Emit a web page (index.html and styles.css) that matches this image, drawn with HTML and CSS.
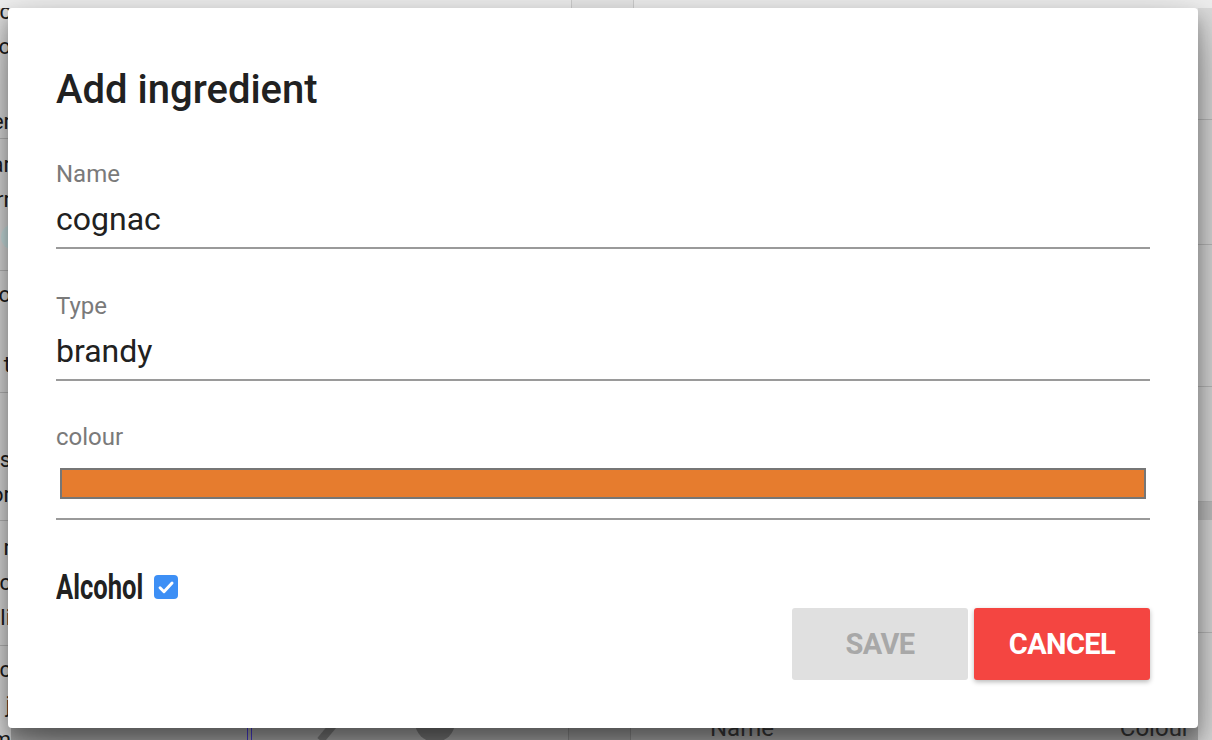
FILE: index.html
```html
<!DOCTYPE html>
<html>
<head>
<meta charset="utf-8">
<link rel="stylesheet" href="styles.css">
</head>
<body>
<div class="page">
  <div class="topbar">
    <div class="top-left"></div>
    <div class="top-tab"></div>
    <div class="top-right"></div>
  </div>
  <div class="main">
    <div class="list">
      <div class="row r1"><span>c</span><span>o</span><span class="gap">er</span></div>
      <div class="row r2"><span>ar</span><span>rr</span><span class="dot"></span></div>
      <div class="row r3"><span>o</span><span class="gap">t</span></div>
      <div class="row r4"><span>as</span><span>or</span></div>
      <div class="row r5"><span>r</span><span>ic</span><span>li</span></div>
      <div class="row r6"><span>c</span><span>j</span><span>um</span></div>
    </div>
    <div class="center">
      <div class="bottom-row">
        <span class="blue-lines"></span>
        <span class="slash"></span>
        <span class="knob"></span>
        <span class="tab-box"></span>
        <span class="th th-name">Name</span>
        <span class="th th-colour">Colour</span>
      </div>
    </div>
    <div class="side">
      <div class="side-row s1"></div>
      <div class="side-row s2"></div>
      <div class="side-row s3"></div>
      <div class="side-row s4"></div>
      <div class="side-band"></div>
      <div class="side-row s5"></div>
    </div>
  </div>
</div>

<div class="overlay">
  <div class="modal">
    <h2 class="title">Add ingredient</h2>

    <div class="field first">
      <label class="label">Name</label>
      <div class="value">cognac</div>
    </div>

    <div class="field">
      <label class="label">Type</label>
      <div class="value">brandy</div>
    </div>

    <div class="field colour-field">
      <label class="label">colour</label>
      <div class="swatch"></div>
    </div>

    <div class="check-row">
      <span class="check-label">Alcohol</span>
      <span class="checkbox">
        <svg viewBox="0 0 24 24" width="22" height="22"><path d="M5.5 12.8l4.3 4.3L18.6 7.6" fill="none" stroke="#fff" stroke-width="3.2" stroke-linecap="round" stroke-linejoin="round"/></svg>
      </span>
    </div>

    <div class="actions">
      <button class="btn btn-save">SAVE</button>
      <button class="btn btn-cancel">CANCEL</button>
    </div>
  </div>
</div>
</body>
</html>
```

FILE: styles.css
```css
html, body {
  margin: 0;
  padding: 0;
}
body {
  width: 1212px;
  height: 740px;
  overflow: hidden;
  position: relative;
  background: #ebebeb;
  font-family: Roboto, "Liberation Sans", sans-serif;
}

/* ---------- background page ---------- */
.page {
  display: flex;
  flex-direction: column;
  height: 740px;
}
.topbar {
  height: 8px;
  display: flex;
  background: #efefef;
}
.top-left { width: 571px; }
.top-tab {
  width: 61px;
  background: #e9e9e9;
  border-left: 1px solid #cfcfcf;
  border-right: 1px solid #cfcfcf;
}
.top-right { flex: 1; }

.main {
  flex: 1;
  display: flex;
  min-height: 0;
}
.list {
  width: 11px;
  background: #dedede;
  color: #1c1c1c;
  font-size: 22px;
  direction: rtl;
  overflow: hidden;
}
.row {
  box-sizing: border-box;
  display: flex;
  flex-direction: column;
  align-items: flex-start;
  border-bottom: 1px solid #b9b9b9;
  line-height: 35px;
}
.row span { white-space: nowrap; }
.r1 { height: 145px; margin-top: -14px; }
.r2 { height: 132px; padding-top: 8px; }
.r3 { height: 122px; padding-top: 6px; }
.r4 { height: 128px; padding-top: 49px; }
.r5 { height: 125px; padding-top: 9px; }
.r6 { height: 110px; padding-top: 6px; border-bottom: 0; }
.r1 .gap { margin-top: 40px; }
.r3 .gap { margin-top: 35px; }
.dot {
  width: 26px;
  height: 26px;
  border-radius: 50%;
  background: #cde3e4;
  margin-top: 7px;
  margin-right: -16px;
}
.center {
  flex: 1;
  display: flex;
  flex-direction: column;
  justify-content: flex-end;
}
.bottom-row {
  height: 16px;
  display: flex;
  align-items: flex-start;
  background: #adadad;
  color: #3a3a3a;
  font-size: 24px;
  line-height: 16px;
  overflow: hidden;
}
.blue-lines {
  width: 3px;
  height: 16px;
  border-left: 1px solid #4a3bd6;
  border-right: 1px solid #4a3bd6;
  margin-left: 236px;
}
.slash {
  width: 8px;
  height: 30px;
  background: #7d7d7d;
  transform: rotate(40deg);
  margin-left: 74px;
  margin-top: -10px;
}
.knob {
  width: 40px;
  height: 40px;
  border-radius: 50%;
  background: #7b7b7b;
  margin-left: 81px;
  margin-top: -22px;
}
.tab-box {
  width: 61px;
  height: 16px;
  background: #a5a5a5;
  border-left: 1px solid #8f8f8f;
  border-right: 1px solid #8f8f8f;
  margin-left: 113px;
}
.th { white-space: nowrap; margin-top: -4px; }
.th-name { margin-left: 79px; }
.th-colour { margin-left: auto; margin-right: 8px; }

.side {
  width: 14px;
  display: flex;
  flex-direction: column;
  background: #dcdcdc;
}
.side-row { border-bottom: 1px solid #bdbdbd; }
.s1 { height: 111px; }
.s2 { height: 124px; }
.s3 { height: 141px; }
.s4 { height: 114px; }
.side-band { height: 18px; background: #c4c4c4; }
.s5 { height: 112px; }

/* ---------- overlay & modal ---------- */
.overlay {
  position: absolute;
  inset: 0;
  display: flex;
  padding: 8px 14px 12px 8px;
}
.modal {
  flex: 1;
  background: #fff;
  border-radius: 4px;
  padding: 0 48px 48px 48px;
  display: flex;
  flex-direction: column;
  box-shadow: 0 20px 50px rgba(0,0,0,0.4), 0 10px 16px rgba(0,0,0,0.25);
}
.title {
  margin: 58px 0 0;
  font-size: 40px;
  line-height: 47px;
  font-weight: 500;
  color: #212121;
}
.field {
  margin-top: 43px;
  border-bottom: 2px solid #9a9a9a;
  padding-bottom: 9px;
}
.field.first { margin-top: 47px; }
.label {
  display: block;
  font-size: 24px;
  line-height: 28px;
  color: #7a7a7a;
}
.value {
  font-size: 32px;
  line-height: 38px;
  color: #212121;
  margin-top: 12px;
}
.colour-field {
  margin-top: 42px;
  padding-bottom: 0;
}
.swatch {
  margin: 17px 4px 19px;
  height: 27px;
  background: #e67c2e;
  border: 2px solid #767676;
}
.check-row {
  display: flex;
  align-items: center;
  margin-top: 50px;
  height: 34px;
}
.check-label {
  font-size: 35px;
  font-weight: 700;
  color: #212121;
  display: inline-block;
  white-space: nowrap;
  transform: scaleX(0.73);
  transform-origin: left center;
  width: 84px;
}
.checkbox {
  width: 24px;
  height: 24px;
  border-radius: 4px;
  background: #3d8ff5;
  display: flex;
  align-items: center;
  justify-content: center;
  margin-left: 14px;
}
.actions {
  display: flex;
  justify-content: flex-end;
  gap: 6px;
  margin-top: 4px;
}
.btn {
  width: 176px;
  height: 72px;
  border: 0;
  border-radius: 3px;
  font-family: Roboto, "Liberation Sans", sans-serif;
  font-size: 29px;
  font-weight: 700;
  letter-spacing: -0.6px;
  padding: 0;
}
.btn-save {
  background: #e0e0e0;
  color: #a8a8a8;
}
.btn-cancel {
  background: #f44541;
  color: #fff;
  box-shadow: 0 2px 5px rgba(0,0,0,0.28);
}
```
